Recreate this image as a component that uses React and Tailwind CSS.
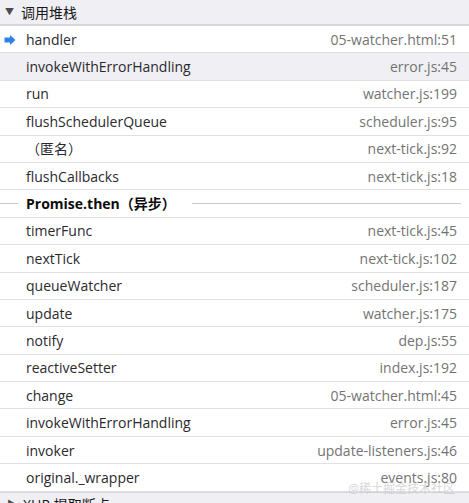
import React from 'react';

const frames = [
  { name: 'handler', loc: '05-watcher.html:51', current: true },
  { name: 'invokeWithErrorHandling', loc: 'error.js:45', hover: true },
  { name: 'run', loc: 'watcher.js:199' },
  { name: 'flushSchedulerQueue', loc: 'scheduler.js:95' },
  { name: '（匿名）', loc: 'next-tick.js:92' },
  { name: 'flushCallbacks', loc: 'next-tick.js:18' },
  { async: 'Promise.then（异步）' },
  { name: 'timerFunc', loc: 'next-tick.js:45' },
  { name: 'nextTick', loc: 'next-tick.js:102' },
  { name: 'queueWatcher', loc: 'scheduler.js:187' },
  { name: 'update', loc: 'watcher.js:175' },
  { name: 'notify', loc: 'dep.js:55' },
  { name: 'reactiveSetter', loc: 'index.js:192' },
  { name: 'change', loc: '05-watcher.html:45' },
  { name: 'invokeWithErrorHandling', loc: 'error.js:45' },
  { name: 'invoker', loc: 'update-listeners.js:46' },
  { name: 'original._wrapper', loc: 'events.js:80' },
];

const font = { fontFamily: '"Open Sans", "Noto Sans CJK SC", sans-serif' };

const Arrow = () => (
  <svg width="12" height="12" viewBox="0 0 12 12" className="absolute left-[4px] top-[8px]">
    <path d="M0.5 3.5 H6 V1 L11.5 6 L6 11 V8.5 H0.5 Z" fill="#2f80ed" />
  </svg>
);

export default function App() {
  return (
    <div className="relative w-[469px] h-[503px] overflow-hidden bg-white text-[14px] text-[#2a2a2e]" style={font}>
      {/* section header */}
      <div className="flex items-center h-[26px] bg-[#f0f0f4] border-b-2 border-[#d7d7db]">
        <span className="ml-[5px] w-[14px] text-[9px] text-[#4a4a4f]">▼</span>
        <span className="ml-[2px] text-[14px] text-[#18181a]">调用堆栈</span>
      </div>

      {frames.map((f, i) =>
        f.async ? (
          <div key={i} className="flex items-center h-[27.4px] border-b border-[#e0e0e2] bg-white">
            <div className="w-[18px] h-px bg-[#c8c8cc]" />
            <span className="ml-[8px] font-bold text-[#0c0c0d]">{f.async}</span>
            <div className="ml-[16px] mr-[8px] flex-1 h-px bg-[#c8c8cc]" />
          </div>
        ) : (
          <div
            key={i}
            className={
              'relative flex items-center justify-between h-[27.4px] pl-[26px] pr-[12px] border-b border-[#e0e0e2] ' +
              (f.hover ? 'bg-[#f0f0f4]' : 'bg-white')
            }
          >
            {f.current && <Arrow />}
            <span className="text-[#2a2a2e]">{f.name}</span>
            <span className="text-[#737373]">{f.loc}</span>
          </div>
        )
      )}

      {/* next collapsed section */}
      <div className="flex items-center h-[24px] bg-[#f0f0f4] border-t border-[#d7d7db]">
        <span className="ml-[7px] w-[14px] text-[9px] text-[#4a4a4f]">▶</span>
        <span className="ml-[2px] text-[14px] text-[#18181a]">XHR 提取断点</span>
      </div>

      <span className="absolute right-[14px] top-[480px] text-[12px] text-[#c8c8cc] opacity-70 pointer-events-none">
        @稀土掘金技术社区
      </span>
    </div>
  );
}
